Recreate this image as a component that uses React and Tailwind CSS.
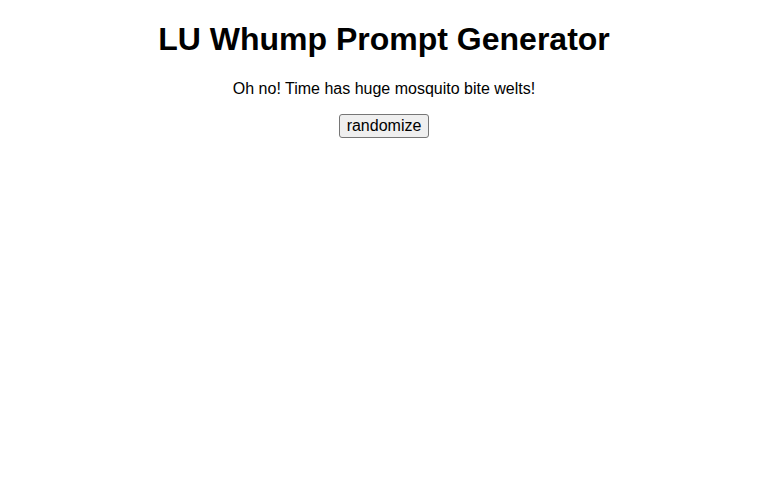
import { useState } from 'react';

const prompts = [
    'Oh no! Time has huge mosquito bite welts!',
];

export default function App() {
    const [prompt, setPrompt] = useState(prompts[0]);

    return (
        <div className="text-center text-black bg-white min-h-screen pt-[21.44px]" style={{ fontFamily: '"Liberation Sans", Arial, sans-serif' }}>
            <h1 className="text-[32px] leading-[37px] font-bold">LU Whump Prompt Generator</h1>
            <p className="mt-[21.44px] text-[16px] leading-[18px]">{prompt}</p>
            <div className="mt-[16px]">
                <button
                    onClick={() => setPrompt(prompts[Math.floor(Math.random() * prompts.length)])}
                    className="text-[16px] leading-[18px] px-[7px] py-[2px] bg-[#efefef] border border-[#767676] rounded-[3px]"
                >
                    randomize
                </button>
            </div>
        </div>
    );
}
